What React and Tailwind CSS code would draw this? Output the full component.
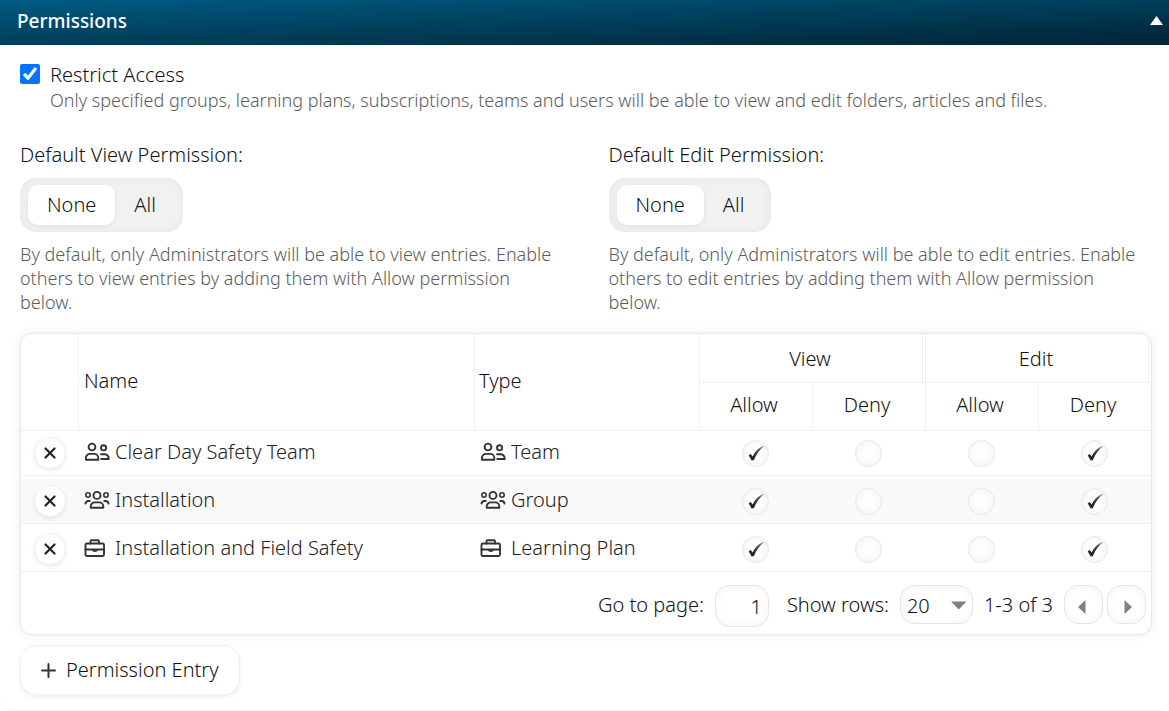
import { useState } from "react";
import clsx from "clsx";

const ENTRIES = [
  { name: "Clear Day Safety Team", type: "Team", icon: TeamIcon, view: "allow", edit: "deny" },
  { name: "Installation", type: "Group", icon: GroupIcon, view: "allow", edit: "deny" },
  { name: "Installation and Field Safety", type: "Learning Plan", icon: PlanIcon, view: "allow", edit: "deny" },
];

const CHOICES = [
  { scope: "view", value: "allow" },
  { scope: "view", value: "deny" },
  { scope: "edit", value: "allow" },
  { scope: "edit", value: "deny" },
];

const ICON_PROPS = {
  width: 26,
  height: 20,
  viewBox: "0 0 26 20",
  fill: "none",
  stroke: "#333",
  strokeWidth: 1.9,
  strokeLinecap: "round",
  strokeLinejoin: "round",
  "aria-hidden": true,
  className: "shrink-0",
};

function TeamIcon() {
  return (
    <svg {...ICON_PROPS}>
      <circle cx="8" cy="5" r="3.4" />
      <path d="M1.9 17.8V15.9a4 4 0 0 1 4-4h4.400a4 4 0 0 1 4 4v1.900z" />
      <circle cx="19.6" cy="5.8" r="2.6" />
      <path d="M17 12.300h3.700a4 4 0 0 1 4 4v.7h-7.400" />
    </svg>
  );
}

function GroupIcon() {
  return (
    <svg {...ICON_PROPS}>
      <circle cx="13" cy="5.4" r="3.5" />
      <path d="M6.700 17.800V16.400a4 4 0 0 1 4-4h4.600a4 4 0 0 1 4 4v1.400z" />
      <circle cx="4" cy="5" r="2.2" strokeWidth="1.6" />
      <circle cx="22" cy="5" r="2.2" strokeWidth="1.6" />
      <path d="M1.500 13.600a3 3 0 0 1 2.900-2.600h1.400M24.500 13.600a3 3 0 0 0-2.900-2.600h-1.400" />
    </svg>
  );
}

function PlanIcon() {
  return (
    <svg {...ICON_PROPS}>
      <rect x="1.5" y="5.5" width="18.5" height="12.5" rx="1.5" />
      <path d="M6.500 5.500V3.200a1 1 0 0 1 1-1h6.500a1 1 0 0 1 1 1v2.300M1.500 11.500h18.500" />
      <path d="M8.500 11.500h4.600v.8a1 1 0 0 1-1 1h-2.600a1 1 0 0 1-1-1z" fill="#333" strokeWidth="1" />
    </svg>
  );
}

function DefaultPermission({ label, name, help }) {
  const [value, setValue] = useState("None");

  return (
    <fieldset className="min-w-0">
      <legend className="leading-6">{label}</legend>
      <div className="mt-[11px] inline-flex rounded-2xl bg-[#f1f1f1] px-2 py-[7px] align-top shadow-[inset_0_0_8px_rgba(0,0,0,0.06)]">
        {["None", "All"].map((option) => (
          <label
            key={option}
            className={clsx(
              "cursor-pointer rounded-[10px] px-[19px] leading-10",
              value === option && "bg-white shadow-[0_1px_4px_rgba(0,0,0,0.08)]"
            )}
          >
            <input
              type="radio"
              name={name}
              value={option}
              checked={value === option}
              onChange={() => setValue(option)}
              className="sr-only"
            />
            {option}
          </label>
        ))}
      </div>
      <p className="mt-2.5 pr-2 text-[18px] leading-6 text-[#5c5c5c]">{help}</p>
    </fieldset>
  );
}

function CheckCircle({ label, checked, onChange }) {
  return (
    <label className="relative inline-flex cursor-pointer align-middle">
      <input
        type="checkbox"
        aria-label={label}
        checked={checked}
        onChange={onChange}
        className="size-[27px] appearance-none rounded-full border border-[#e6e6e6] bg-[radial-gradient(circle,#ffffff_20%,#f3f3f3_100%)]"
      />
      {checked && (
        <svg
          className="pointer-events-none absolute inset-0"
          width="27"
          height="27"
          viewBox="0 0 27 27"
          aria-hidden="true"
        >
          <defs>
            <linearGradient id="tick" x1="0" y1="1" x2="1" y2="0">
              <stop offset="0.3" stopColor="#2a2a2a" />
              <stop offset="0.7" stopColor="#555" />
              <stop offset="1" stopColor="#ccc" />
            </linearGradient>
          </defs>
          <path
            d="M6.600 15.200 8.800 14l1.800 2.600C13 11.500 16.500 7.800 21.600 5.600L22 6.600C17.800 9.600 14.600 13.800 11.800 20.200L9.600 20.600z"
            fill="url(#tick)"
          />
        </svg>
      )}
    </label>
  );
}

function EntryRow({ entry, first, striped, onToggle, onRemove }) {
  const Icon = entry.icon;
  const cell = clsx(
    "border-b border-b-[#f0f0f0] bg-clip-padding",
    first ? "h-[45px]" : "h-12 border-t-[3px] border-t-white",
    striped && "bg-[#f9f9f9]"
  );

  return (
    <tr>
      <td className={clsx(cell, "text-center")}>
        <button
          type="button"
          aria-label={`Remove ${entry.name}`}
          onClick={onRemove}
          className="inline-flex size-8 items-center justify-center rounded-full border border-[#f0f0f0] bg-white align-middle shadow-[0_2px_4px_rgba(0,0,0,0.08)]"
        >
          <svg width="12" height="12" viewBox="0 0 12 12" stroke="#222" strokeWidth="2.2" strokeLinecap="round" aria-hidden="true">
            <path d="M1.500 1.500l9 9M10.500 1.500l-9 9" />
          </svg>
        </button>
      </td>
      {[entry.name, entry.type].map((text) => (
        <td key={text} className={clsx(cell, "px-1.5 text-[#222]")}>
          <div className="flex items-center gap-[5px] pb-0.5">
            <Icon />
            <span>{text}</span>
          </div>
        </td>
      ))}
      {CHOICES.map(({ scope, value }) => (
        <td key={scope + value} className={clsx(cell, "text-center")}>
          <CheckCircle
            label={`${entry.name}: ${scope} ${value}`}
            checked={entry[scope] === value}
            onChange={() => onToggle(scope, value)}
          />
        </td>
      ))}
    </tr>
  );
}

function PermissionTable() {
  const [entries, setEntries] = useState(ENTRIES);
  const [page, setPage] = useState("1");

  const toggle = (index, scope, value) =>
    setEntries(entries.map((e, i) => (i === index ? { ...e, [scope]: e[scope] === value ? null : value } : e)));

  const remove = (index) => setEntries(entries.filter((_, i) => i !== index));

  const field = "rounded-[14px] border border-[#e6e6e6] bg-white shadow-[inset_0_0_8px_rgba(0,0,0,0.05)]";
  const head = "border-b border-l border-[#f0f0f0] font-light";

  return (
    <div className="overflow-hidden rounded-xl border border-[#e8e8e8] bg-white shadow-[0_0_10px_rgba(0,0,0,0.08)]">
      <table className="w-full table-fixed border-separate border-spacing-0">
        <colgroup>
          <col className="w-[57px]" />
          <col />
          <col className="w-[225px]" />
          <col className="w-[113px]" />
          <col className="w-[113px]" />
          <col className="w-[113px]" />
          <col className="w-[113px]" />
        </colgroup>
        <thead>
          <tr>
            <td rowSpan={2} className="border-b border-[#f0f0f0]" />
            <th rowSpan={2} scope="col" className={clsx(head, "px-[5px] pb-0.5 text-left")}>Name</th>
            <th rowSpan={2} scope="col" className={clsx(head, "px-1 pb-0.5 text-left")}>Type</th>
            {["View", "Edit"].map((title) => (
              <th key={title} colSpan={2} scope="colgroup" className="border-l border-[#f0f0f0] p-0 pr-0.5 font-light">
                <div className="h-[49px] border-r border-b border-[#f0f0f0] pr-0.5 leading-[50px]">{title}</div>
              </th>
            ))}
          </tr>
          <tr>
            {CHOICES.map(({ scope, value }) => (
              <th key={scope + value} scope="col" className={clsx(head, "h-12 pr-1 pb-1 capitalize")}>
                {value}
              </th>
            ))}
          </tr>
        </thead>
        <tbody>
          {entries.map((entry, i) => (
            <EntryRow
              key={entry.name}
              entry={entry}
              first={i === 0}
              striped={i % 2 === 1}
              onToggle={(scope, value) => toggle(i, scope, value)}
              onRemove={() => remove(i)}
            />
          ))}
        </tbody>
      </table>

      {/* Pager */}
      <div className="flex flex-wrap items-start justify-end pt-[13px] pr-[5px] pb-[7px] leading-[39px]">
        <label className="mr-[18px] flex gap-[11px]">
          Go to page:
          <input
            type="text"
            inputMode="numeric"
            value={page}
            onChange={(e) => setPage(e.target.value)}
            className={clsx(field, "h-[42px] w-[54px] px-1.5 text-right")}
          />
        </label>
        <label className="mr-[11px] flex gap-[11px]">
          Show rows:
          <span className="relative">
            <select defaultValue="20" className={clsx(field, "block h-[39px] w-[73px] appearance-none pl-1.5")}>
              <option>10</option>
              <option>20</option>
              <option>50</option>
            </select>
            <svg className="pointer-events-none absolute top-4 right-1.5" width="16" height="9" viewBox="0 0 16 9" fill="#808080" aria-hidden="true">
              <path d="M0 .5h15.500L7.750 8.500z" />
            </svg>
          </span>
        </label>
        <span className="mr-[11px]">1-3 of 3</span>
        <button type="button" aria-label="Previous page" className={clsx(field, "mr-1 flex size-[39px] items-center justify-center pr-1")}>
          <svg className="mt-1" width="9" height="14" viewBox="0 0 9 14" fill="#808080" aria-hidden="true">
            <path d="M8.500 0v14L1 7z" />
          </svg>
        </button>
        <button type="button" aria-label="Next page" className={clsx(field, "flex size-[39px] items-center justify-center pl-1")}>
          <svg className="mt-1" width="9" height="14" viewBox="0 0 9 14" fill="#808080" aria-hidden="true">
            <path d="M.5 0v14L8 7z" />
          </svg>
        </button>
      </div>
    </div>
  );
}

export default function App() {
  const [open, setOpen] = useState(true);
  const [restricted, setRestricted] = useState(true);

  return (
    <section className="rounded-b-xl border-b border-[#eeeeee] bg-white font-['Noto_Sans',sans-serif] text-[20px] leading-6 font-light text-[#111]">
      <h2>
        <button
          type="button"
          aria-expanded={open}
          onClick={() => setOpen(!open)}
          className="flex h-[45px] w-full items-center justify-between bg-linear-to-br from-[#005b84] to-[#002434] pr-1.5 pb-1 pl-[17px] text-[19px] font-medium text-white"
        >
          Permissions
          <svg className={clsx(!open && "rotate-180")} width="13" height="9" viewBox="0 0 13 9" fill="#fff" aria-hidden="true">
            <path d="M6.500 0L13 9H0z" />
          </svg>
        </button>
      </h2>

      {open && (
        <div className="pt-[18px] pr-[17px] pb-[15px] pl-5">
          <div className="flex gap-2.5">
            <input
              id="restrict"
              type="checkbox"
              checked={restricted}
              onChange={() => setRestricted(!restricted)}
              aria-describedby="restrict-help"
              className="mt-px size-5 shrink-0"
            />
            <div>
              <label htmlFor="restrict" className="block">Restrict Access</label>
              <p id="restrict-help" className="mt-px text-[18px] leading-6 text-[#5c5c5c]">
                Only specified groups, learning plans, subscriptions, teams and users will be able to view and edit
                folders, articles and files.
              </p>
            </div>
          </div>

          <div className="mt-[31px] grid grid-cols-2 gap-[45px]">
            <DefaultPermission
              label="Default View Permission:"
              name="default-view"
              help="By default, only Administrators will be able to view entries. Enable others to view entries by adding them with Allow permission below."
            />
            <DefaultPermission
              label="Default Edit Permission:"
              name="default-edit"
              help="By default, only Administrators will be able to edit entries. Enable others to edit entries by adding them with Allow permission below."
            />
          </div>

          <div className="mt-[19px]">
            <PermissionTable />
          </div>

          <button
            type="button"
            className="mt-2.5 flex h-[50px] items-center gap-2.5 rounded-2xl border border-[#f0f0f0] bg-white px-5 shadow-[0_2px_5px_rgba(0,0,0,0.07)]"
          >
            <svg width="15" height="15" viewBox="0 0 15 15" stroke="#333" strokeWidth="2" strokeLinecap="round" aria-hidden="true">
              <path d="M7.500 1v13M1 7.500h13" />
            </svg>
            Permission Entry
          </button>
        </div>
      )}
    </section>
  );
}
